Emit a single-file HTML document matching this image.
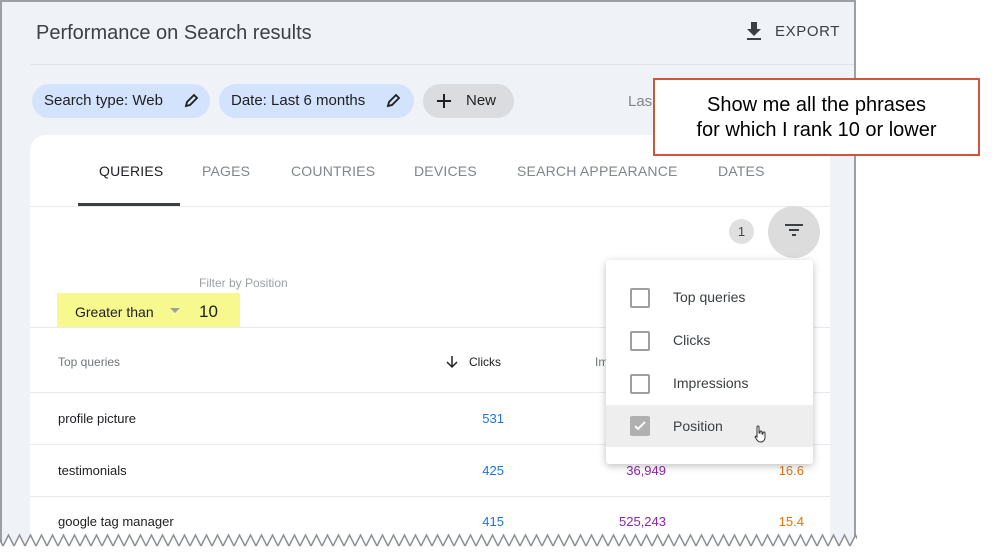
<!DOCTYPE html>
<html><head><meta charset="utf-8"><style>
*{margin:0;padding:0;box-sizing:border-box}
body{width:1000px;height:548px;background:#fff;position:relative;overflow:hidden;font-family:"Liberation Sans",sans-serif}
.frame{position:absolute;left:0;top:0;width:856px;height:548px;background:#eff2f7;border:2px solid #9aa0a6;border-bottom:none}
.abs{position:absolute;white-space:nowrap}
.title{left:36px;top:22px;font-size:20px;color:#3c4043}
.div1{left:30px;top:64px;width:824px;height:1px;background:#dfe2e8}
.chip{top:84px;height:34px;border-radius:17px;background:#d3e3fd;font-size:15px;color:#1f1f1f;line-height:34px;padding-left:12px}
.card{left:30px;top:135px;width:800px;height:420px;background:#fff;border-radius:16px 16px 0 0}
.tab{top:163px;font-size:14px;color:#80868b;letter-spacing:.2px}
.cb{position:absolute;left:24px;width:20px;height:20px;border:2px solid #9e9e9e;border-radius:2px;background:#fff}
.mi{position:absolute;left:67px;font-size:14px;color:#3c4043}
.row{font-size:13px;color:#202124}
.num{font-size:13px;text-align:right;width:80px}
.line{height:1px;background:#e8eaed;left:30px;width:800px}
</style></head><body>
<div class="frame"></div>
<div class="abs title">Performance on Search results</div>
<svg class="abs" style="left:744px;top:21px" width="20" height="20" viewBox="0 0 20 20"><path d="M7 1h6v7h4l-7 7-7-7h4z" fill="#3c4043"/><rect x="3" y="17" width="14" height="2" fill="#3c4043"/></svg>
<div class="abs" style="left:775px;top:23px;font-size:15px;color:#3c4043;letter-spacing:.6px">EXPORT</div>
<div class="abs div1"></div>
<div class="abs chip" style="left:32px;width:178px">Search type: Web
<svg class="abs" style="left:151px;top:9px" width="16" height="16" viewBox="0 0 16 16"><path d="M3 13l1-4 7-7 3 3-7 7z" fill="none" stroke="#1f1f1f" stroke-width="1.8"/></svg></div>
<div class="abs chip" style="left:219px;width:195px">Date: Last 6 months
<svg class="abs" style="left:166px;top:9px" width="16" height="16" viewBox="0 0 16 16"><path d="M3 13l1-4 7-7 3 3-7 7z" fill="none" stroke="#1f1f1f" stroke-width="1.8"/></svg></div>
<div class="abs chip" style="left:423px;width:91px;background:#dadce0;padding-left:43px">New
<svg class="abs" style="left:13px;top:9px" width="16" height="16" viewBox="0 0 16 16"><path d="M8 1v14M1 8h14" stroke="#1f1f1f" stroke-width="2"/></svg></div>
<div class="abs" style="left:628px;top:93px;font-size:15px;color:#80868b">Las</div>
<div class="abs card"></div>
<div class="abs tab" style="left:99px;color:#202124">QUERIES</div>
<div class="abs tab" style="left:202px">PAGES</div>
<div class="abs tab" style="left:291px">COUNTRIES</div>
<div class="abs tab" style="left:414px">DEVICES</div>
<div class="abs tab" style="left:517px">SEARCH APPEARANCE</div>
<div class="abs tab" style="left:718px">DATES</div>
<div class="abs" style="left:78px;top:203px;width:102px;height:3px;background:#3c4043"></div>
<div class="abs line" style="top:206px"></div>
<div class="abs" style="left:729px;top:219px;width:25px;height:25px;border-radius:50%;background:#e0e0e0;font-size:13px;color:#444;text-align:center;line-height:25px">1</div>
<div class="abs" style="left:768px;top:206px;width:52px;height:52px;border-radius:50%;background:#dcdcdc"></div>
<svg class="abs" style="left:784px;top:223px" width="20" height="16"><path d="M1 2h18M5 7h10M8 12h4" stroke="#3c4043" stroke-width="2"/></svg>
<div class="abs" style="left:199px;top:276px;font-size:12px;color:#9aa0a6">Filter by Position</div>
<div class="abs" style="left:57px;top:293px;width:183px;height:34px;background:#f7f88d"></div>
<div class="abs" style="left:75px;top:304px;font-size:14px;color:#202124">Greater than</div>
<div class="abs" style="left:170px;top:308px;width:0;height:0;border-left:5px solid transparent;border-right:5px solid transparent;border-top:5px solid #a0a0a0"></div>
<div class="abs" style="left:199px;top:302px;font-size:17px;color:#202124">10</div>
<div class="abs line" style="top:327px"></div>
<div class="abs" style="left:58px;top:355px;font-size:12px;color:#70757a">Top queries</div>
<svg class="abs" style="left:446px;top:355px" width="12" height="14"><path d="M6 1v11M1 7l5 5 5-5" fill="none" stroke="#202124" stroke-width="1.5"/></svg>
<div class="abs" style="left:469px;top:355px;font-size:12px;color:#202124">Clicks</div>
<div class="abs" style="left:595px;top:355px;font-size:12px;color:#70757a">Im</div>
<div class="abs line" style="top:392px"></div>
<div class="abs line" style="top:444px"></div>
<div class="abs line" style="top:496px"></div>
<div class="abs row" style="left:58px;top:411px">profile picture</div>
<div class="abs row" style="left:58px;top:463px">testimonials</div>
<div class="abs row" style="left:58px;top:514px">google tag manager</div>
<div class="abs num" style="left:424px;top:411px;color:#1a73e8">531</div>
<div class="abs num" style="left:424px;top:463px;color:#1a73e8">425</div>
<div class="abs num" style="left:424px;top:514px;color:#1a73e8">415</div>
<div class="abs num" style="left:586px;top:463px;color:#8e24aa">36,949</div>
<div class="abs num" style="left:586px;top:514px;color:#8e24aa">525,243</div>
<div class="abs num" style="left:724px;top:463px;color:#e8710a">16.6</div>
<div class="abs num" style="left:724px;top:514px;color:#e8710a">15.4</div>
<div class="abs" style="left:606px;top:260px;width:207px;height:204px;background:#fff;box-shadow:0 2px 8px rgba(0,0,0,.25);border-radius:3px">
<div class="cb" style="top:28px"></div><div class="mi" style="top:29px">Top queries</div>
<div class="cb" style="top:71px"></div><div class="mi" style="top:72px">Clicks</div>
<div class="cb" style="top:114px"></div><div class="mi" style="top:115px">Impressions</div>
<div style="position:absolute;left:0;top:145px;width:207px;height:42px;background:#eeeeee"></div>
<div class="cb" style="top:156px;background:#b0b0b0;border-color:#b0b0b0"><svg width="16" height="16" style="position:absolute;left:0;top:0"><path d="M3 8l3 3 7-7" fill="none" stroke="#fff" stroke-width="2"/></svg></div>
<div class="mi" style="top:158px">Position</div>
<svg style="position:absolute;left:147px;top:165px" width="14" height="18" viewBox="0 0 14 18"><path d="M4 10V2a1 1 0 0 1 2 0v6h1V7a1 1 0 0 1 2 0v2h1V8a1 1 0 0 1 2 0v5c0 2-2 4-4 4H7c-2 0-3-2-5-5l1-1 1 1z" fill="#fff" stroke="#333" stroke-width="1"/></svg>
</div>
<div class="abs" style="left:653px;top:78px;width:327px;height:78px;background:#fff;border:2px solid #d0553a;text-align:center;font-size:20px;line-height:25px;color:#000;padding-top:13px">Show me all the phrases<br>for which I rank 10 or lower</div>
<svg class="abs" style="left:0;top:530px" width="860" height="18">
<defs><pattern id="z" x="3" y="0" width="11" height="18" patternUnits="userSpaceOnUse"><path d="M0,16 L5.5,5 L11,16 L11,18 L0,18Z" fill="#fff"/><path d="M0,16 L5.5,5 L11,16" fill="none" stroke="#8a8f94" stroke-width="1.5"/></pattern></defs>
<rect x="0" y="0" width="857" height="18" fill="url(#z)"/>
</svg>
</body></html>
